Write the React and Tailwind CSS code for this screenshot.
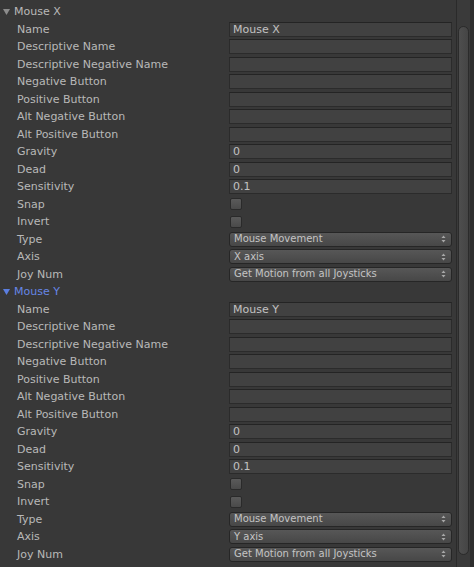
import React from 'react';

const FONT = { fontFamily: '"DejaVu Sans", "Liberation Sans", sans-serif' };

const fields = (axisName, axis) => [
    { label: 'Name', kind: 'text', value: axisName },
    { label: 'Descriptive Name', kind: 'text', value: '' },
    { label: 'Descriptive Negative Name', kind: 'text', value: '' },
    { label: 'Negative Button', kind: 'text', value: '' },
    { label: 'Positive Button', kind: 'text', value: '' },
    { label: 'Alt Negative Button', kind: 'text', value: '' },
    { label: 'Alt Positive Button', kind: 'text', value: '' },
    { label: 'Gravity', kind: 'text', value: '0' },
    { label: 'Dead', kind: 'text', value: '0' },
    { label: 'Sensitivity', kind: 'text', value: '0.1' },
    { label: 'Snap', kind: 'check' },
    { label: 'Invert', kind: 'check' },
    { label: 'Type', kind: 'select', value: 'Mouse Movement' },
    { label: 'Axis', kind: 'select', value: axis },
    { label: 'Joy Num', kind: 'select', value: 'Get Motion from all Joysticks' },
];

const Arrows = () => (
    <svg width="5" height="8" viewBox="0 0 5 8" className="shrink-0">
        <path d="M2.5 0.5 L4.5 3 L0.5 3 Z" fill="#a8a8a8" />
        <path d="M2.5 7.5 L4.5 5 L0.5 5 Z" fill="#a8a8a8" />
    </svg>
);

const Control = ({ f }) => {
    if (f.kind === 'check') {
        return (
            <div className="w-[12px] h-[12px] rounded-[2px] border border-[#2a2a2a] bg-gradient-to-b from-[#5a5a5a] to-[#4a4a4a] ml-[1px]" />
        );
    }
    if (f.kind === 'select') {
        return (
            <div className="h-[15px] w-full rounded-[3px] border border-[#262626] bg-gradient-to-b from-[#575757] to-[#474747] flex items-center justify-between pl-[4px] pr-[5px]">
                <span className="text-[10px] leading-none text-[#c4c4c4]">{f.value}</span>
                <Arrows />
            </div>
        );
    }
    return (
        <div className="h-[15px] w-full border border-[#2b2b2b] border-t-[#242424] bg-[#414141] flex items-center pl-[3px]">
            <span className="text-[11px] leading-none text-[#c2c2c2]">{f.value}</span>
        </div>
    );
};

const Section = ({ title, active, axis }) => (
    <div>
        <div className="h-[17.5px] flex items-center pl-[3px] gap-[4px]">
            <svg width="7" height="6" viewBox="0 0 7 6">
                <path d="M0 0 L7 0 L3.5 6 Z" fill={active ? '#5b7ee0' : '#8c8c8c'} />
            </svg>
            <span className={`text-[11px] leading-none ${active ? 'text-[#6686e6]' : 'text-[#b8b8b8]'}`}>{title}</span>
        </div>
        {fields(title, axis).map(f => (
            <div key={f.label} className="h-[17.5px] flex items-center">
                <div className="w-[229px] pl-[17px] text-[11px] leading-none text-[#b8b8b8] shrink-0">{f.label}</div>
                <div className="flex-1 pr-[4px]">
                    <Control f={f} />
                </div>
            </div>
        ))}
    </div>
);

export default function App() {
    return (
        <div className="w-[474px] h-[567px] bg-[#383838] overflow-hidden flex" style={FONT}>
            <div className="flex-1 pt-[3px]">
                <Section title="Mouse X" axis="X axis" />
                <Section title="Mouse Y" axis="Y axis" active />
            </div>
            <div className="w-[18px] h-full flex border-l border-[#2a2a2a]">
                <div className="flex-1 bg-[#3a3a3a] pt-[26px] pb-[12px] px-[1px] flex">
                    <div className="flex-1 rounded-[6px] border border-[#2b2b2b] bg-gradient-to-r from-[#4e4e4e] to-[#454545]" />
                </div>
                <div className="w-[4px] bg-[#2e2e2e]" />
            </div>
        </div>
    );
}
